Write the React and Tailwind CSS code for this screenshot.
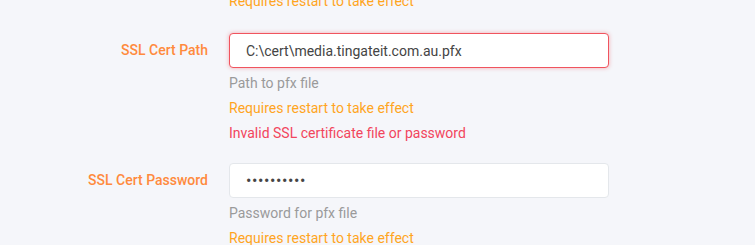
import React from 'react';

const Field = ({ label, value, type, error, help, notes }) => (
    <div className="flex items-start mb-[17px]">
        <label className="w-[208px] shrink-0 text-right text-[14px] font-medium text-[#ff8a3d] leading-[35px]">
            {label}
        </label>
        <div className="ml-[21px] w-[380px]">
            <input
                type={type}
                defaultValue={value}
                readOnly
                className={`w-full h-[35px] rounded-[4px] bg-white px-4 text-[#444] outline-none border ${type === 'password' ? 'text-[16px] tracking-[0.6px]' : 'text-[14px]'} ${error ? 'border-[#f0545e] shadow-[0_0_4px_rgba(240,84,94,0.45)]' : 'border-[#e4e7eb]'}`}
            />
            <div className="mt-[3px]">
                <p className="text-[14px] leading-[25px] text-[#9a9a9a]">{help}</p>
                {notes.map((n, i) => (
                    <p key={i} className={`text-[14px] leading-[25px] ${n.kind === 'error' ? 'text-[#f2455d]' : 'text-[#ffa51f]'}`}>{n.text}</p>
                ))}
            </div>
        </div>
    </div>
);

export default function App() {
    return (
        <div className="w-[755px] h-[245px] overflow-hidden bg-[#f5f6fa]" style={{ fontFamily: 'Roboto, "Liberation Sans", sans-serif' }}>
            <div className="-mt-[11px]">
                <div className="flex mb-[19px]">
                    <div className="w-[208px] shrink-0" />
                    <p className="ml-[21px] text-[14px] leading-[25px] text-[#ffa51f]">Requires restart to take effect</p>
                </div>
                <Field
                    label="SSL Cert Path"
                    type="text"
                    value={'C:\\cert\\media.tingateit.com.au.pfx'}
                    error
                    help="Path to pfx file"
                    notes={[
                        { kind: 'warn', text: 'Requires restart to take effect' },
                        { kind: 'error', text: 'Invalid SSL certificate file or password' },
                    ]}
                />
                <Field
                    label="SSL Cert Password"
                    type="password"
                    value="••••••••••"
                    help="Password for pfx file"
                    notes={[{ kind: 'warn', text: 'Requires restart to take effect' }]}
                />
            </div>
        </div>
    );
}
